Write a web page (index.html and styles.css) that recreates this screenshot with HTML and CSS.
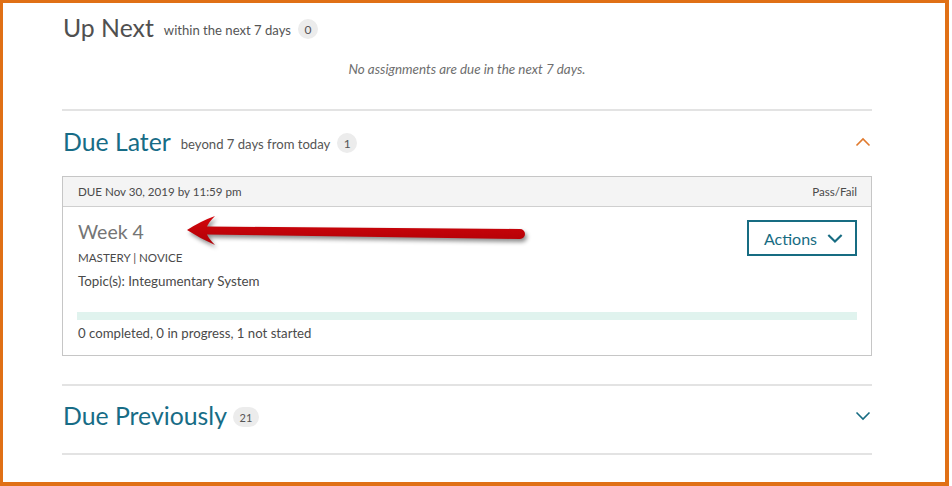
FILE: index.html
```html
<!DOCTYPE html>
<html lang="en">
<head>
    <meta charset="UTF-8">
    <title>Assignments</title>
    <link rel="stylesheet" href="styles.css">
</head>
<body>
    <div class="frame">
        <div class="content">
            <!-- Up Next -->
            <section class="group group-next">
                <div class="group-head">
                    <h2 class="group-title muted">Up Next</h2>
                    <span class="group-sub">within the next 7 days</span>
                    <span class="badge">0</span>
                </div>
                <p class="empty">No assignments are due in the next 7 days.</p>
            </section>

            <!-- Due Later -->
            <section class="group group-later">
                <div class="group-head">
                    <h2 class="group-title">Due Later</h2>
                    <span class="group-sub">beyond 7 days from today</span>
                    <span class="badge">1</span>
                    <span class="toggle">
                        <svg width="16" height="10" viewBox="0 0 16 10"><path d="M1.5 8.5 L8 2 L14.5 8.5" fill="none" stroke="#e07a2e" stroke-width="1.6"/></svg>
                    </span>
                </div>

                <div class="card">
                    <div class="card-header">
                        <span>DUE Nov 30, 2019 by 11:59 pm</span>
                        <span>Pass/Fail</span>
                    </div>
                    <div class="card-body">
                        <div class="card-top">
                            <div class="card-info">
                                <h3 class="card-title">Week 4</h3>
                                <div class="card-meta">MASTERY | NOVICE</div>
                                <div class="card-topic">Topic(s): Integumentary System</div>
                            </div>
                            <button class="actions">
                                Actions
                                <svg width="18" height="11" viewBox="0 0 18 11"><path d="M1.5 1.5 L9 9 L16.5 1.5" fill="none" stroke="#176c82" stroke-width="2.4"/></svg>
                            </button>
                        </div>
                        <div class="progress"></div>
                        <div class="card-status">0 completed, 0 in progress, 1 not started</div>
                    </div>

                    <!-- annotation arrow -->
                    <svg class="pointer" width="350" height="42" viewBox="0 0 350 42">
                        <defs>
                            <linearGradient id="arrowFill" x1="0" y1="0" x2="0" y2="1">
                                <stop offset="0" stop-color="#d4060c"/>
                                <stop offset="1" stop-color="#b00006"/>
                            </linearGradient>
                        </defs>
                        <path d="M6 19 Q20 10 34 5 Q28 11 26 15.5 L339 18 A5 5 0 0 1 339 28 L26 23.5 Q28 28 34 34 Q20 28 6 19 Z" fill="url(#arrowFill)"/>
                    </svg>
                </div>
            </section>

            <!-- Due Previously -->
            <section class="group group-prev">
                <div class="group-head">
                    <h2 class="group-title">Due Previously</h2>
                    <span class="badge badge-tight">21</span>
                    <span class="toggle">
                        <svg width="16" height="10" viewBox="0 0 16 10"><path d="M1.5 1.5 L8 8 L14.5 1.5" fill="none" stroke="#176c82" stroke-width="1.6"/></svg>
                    </span>
                </div>
            </section>
        </div>
    </div>
</body>
</html>
```

FILE: styles.css
```css
* {
    box-sizing: border-box;
    margin: 0;
    padding: 0;
    font-family: Lato, "Open Sans", sans-serif;
}

body {
    background-color: white;
    width: 952px;
    height: 486px;
    overflow: hidden;
}

.frame {
    width: 949px;
    height: 486px;
    border-top: 3px solid #e07016;
    border-left: 3px solid #e07016;
    border-right: 4px solid #e07016;
    border-bottom: 4px solid #e07016;
    background-color: white;
}

.content {
    width: 810px;
    margin-left: 59px;
}

.group {
    border-bottom: 2px solid #e3e3e3;
}

.group-next {
    padding-top: 9px;
    padding-bottom: 31px;
}

.group-later {
    padding-top: 15px;
    padding-bottom: 28px;
}

.group-prev {
    padding-top: 14px;
    padding-bottom: 21px;
}

.group-head {
    display: flex;
    align-items: center;
    height: 32px;
    padding-left: 1px;
}

.group-title {
    font-size: 24.8px;
    font-weight: normal;
    color: #176c86;
    line-height: 32px;
}

.group-title.muted {
    color: #505050;
}

.group-sub {
    font-size: 13.1px;
    color: #555;
    margin-left: 10px;
    margin-top: 4px;
}

.badge {
    display: inline-flex;
    align-items: center;
    justify-content: center;
    min-width: 20px;
    height: 20px;
    border-radius: 10px;
    background-color: #ececec;
    color: #555;
    font-size: 12px;
    margin-left: 7px;
    margin-top: 2px;
}

.badge-tight {
    min-width: 26px;
    font-size: 11px;
    margin-left: 6px;
}

.toggle {
    margin-left: auto;
    display: flex;
    align-items: center;
    margin-right: 1px;
}

.empty {
    text-align: center;
    font-style: italic;
    font-size: 13.4px;
    color: #6e6e6e;
    line-height: 18px;
    margin-top: 16px;
}

.card {
    position: relative;
    margin-top: 18px;
    border: 1px solid #c6c6c6;
}

.card-header {
    display: flex;
    justify-content: space-between;
    align-items: center;
    height: 30px;
    padding: 0 14px 0 15px;
    background-color: #f4f4f4;
    border-bottom: 1px solid #cfcfcf;
    font-size: 11.6px;
    color: #4a4a4a;
}

.card-body {
    padding: 12px 14px 13px 15px;
}

.card-top {
    display: flex;
    justify-content: space-between;
    align-items: flex-start;
}

.card-title {
    font-size: 19.5px;
    font-weight: normal;
    color: #757575;
    line-height: 26px;
}

.card-meta {
    font-size: 11.6px;
    color: #4a4a4a;
    line-height: 18px;
    margin-top: 4px;
}

.card-topic {
    font-size: 13.4px;
    color: #4a4a4a;
    line-height: 18px;
    margin-top: 5px;
}

.actions {
    display: flex;
    align-items: center;
    gap: 10px;
    width: 110px;
    height: 36px;
    margin-top: 1px;
    padding: 0 12px 0 15px;
    border: 2px solid #176c82;
    background-color: white;
    color: #176c82;
    font-size: 16px;
}

.progress {
    height: 8px;
    margin-top: 22px;
    margin-left: -1px;
    background-color: #e0f3ee;
}

.card-status {
    font-size: 13.2px;
    color: #4a4a4a;
    line-height: 18px;
    margin-top: 4px;
}

.pointer {
    position: absolute;
    left: 118px;
    top: 34px;
    filter: drop-shadow(2px 3px 2px rgba(0, 0, 0, 0.45));
}
```
